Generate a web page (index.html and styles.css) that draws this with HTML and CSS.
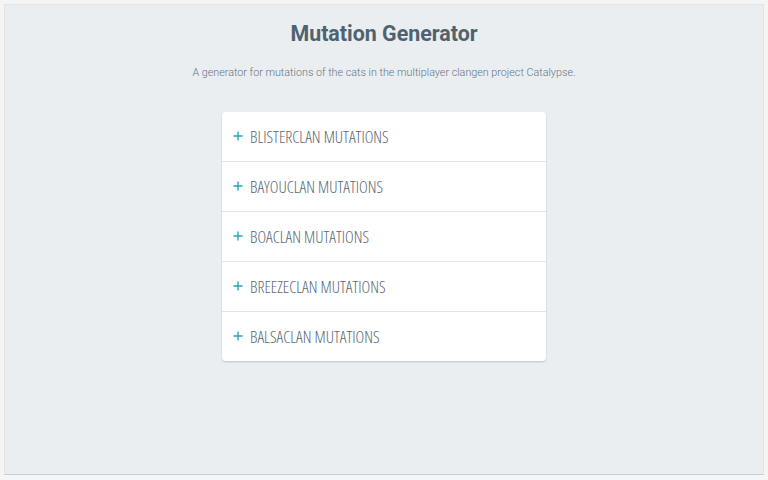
FILE: index.html
```html
<!DOCTYPE html>
<html>
<head>
<meta charset="utf-8">
<link rel="stylesheet" href="styles.css">
</head>
<body>
<div class="frame">
  <main class="panel">
    <h1 class="title">Mutation Generator</h1>
    <p class="subtitle">A generator for mutations of the cats in the multiplayer clangen project Catalypse.</p>
    <div class="accordion">
      <div class="item"><svg class="plus" viewBox="0 0 11 11"><path d="M5.5 0.5V10.5M0.5 5.5H10.5"/></svg><span class="label">BLISTERCLAN MUTATIONS</span></div>
      <div class="item"><svg class="plus" viewBox="0 0 11 11"><path d="M5.5 0.5V10.5M0.5 5.5H10.5"/></svg><span class="label">BAYOUCLAN MUTATIONS</span></div>
      <div class="item"><svg class="plus" viewBox="0 0 11 11"><path d="M5.5 0.5V10.5M0.5 5.5H10.5"/></svg><span class="label">BOACLAN MUTATIONS</span></div>
      <div class="item"><svg class="plus" viewBox="0 0 11 11"><path d="M5.5 0.5V10.5M0.5 5.5H10.5"/></svg><span class="label">BREEZECLAN MUTATIONS</span></div>
      <div class="item"><svg class="plus" viewBox="0 0 11 11"><path d="M5.5 0.5V10.5M0.5 5.5H10.5"/></svg><span class="label">BALSACLAN MUTATIONS</span></div>
    </div>
  </main>
</div>
</body>
</html>
```
FILE: styles.css
```css
html, body {
  margin: 0;
  padding: 0;
  background: #f5f5f5;
  font-family: Roboto, "Liberation Sans", sans-serif;
}
.frame {
  padding: 4px 4px 5px 4px;
  height: 480px;
  box-sizing: border-box;
}
.panel {
  height: 100%;
  box-sizing: border-box;
  background: #eaeef1;
  border: 1px solid #e2e4e6;
  border-bottom: 1px solid #c9cccf;
  display: flex;
  flex-direction: column;
  align-items: center;
}
.title {
  margin: 16px 0 0 0;
  font-size: 21.4px;
  line-height: 26px;
  font-weight: 700;
  color: #4e6270;
}
.subtitle {
  margin: 19px 0 0 0;
  font-size: 10.75px;
  line-height: 14px;
  font-weight: 300;
  color: #66747f;
}
.accordion {
  margin-top: 32px;
  width: 324px;
  background: #fff;
  border-radius: 4px;
  box-shadow: 0 1px 2px rgba(0,0,0,0.18);
}
.item {
  height: 49px;
  display: flex;
  align-items: center;
  padding-left: 11px;
  border-bottom: 1px solid #e3e6e8;
}
.item:last-child {
  border-bottom: none;
}
.plus {
  width: 10px;
  height: 10px;
  margin-right: 7px;
  margin-top: -2px;
  fill: none;
  stroke: #24a4b4;
  stroke-width: 1.5;
}
.label {
  font-family: "Open Sans", sans-serif;
  font-stretch: 75%;
  font-weight: 300;
  font-size: 16.5px;
  color: #5b6873;
}
```
